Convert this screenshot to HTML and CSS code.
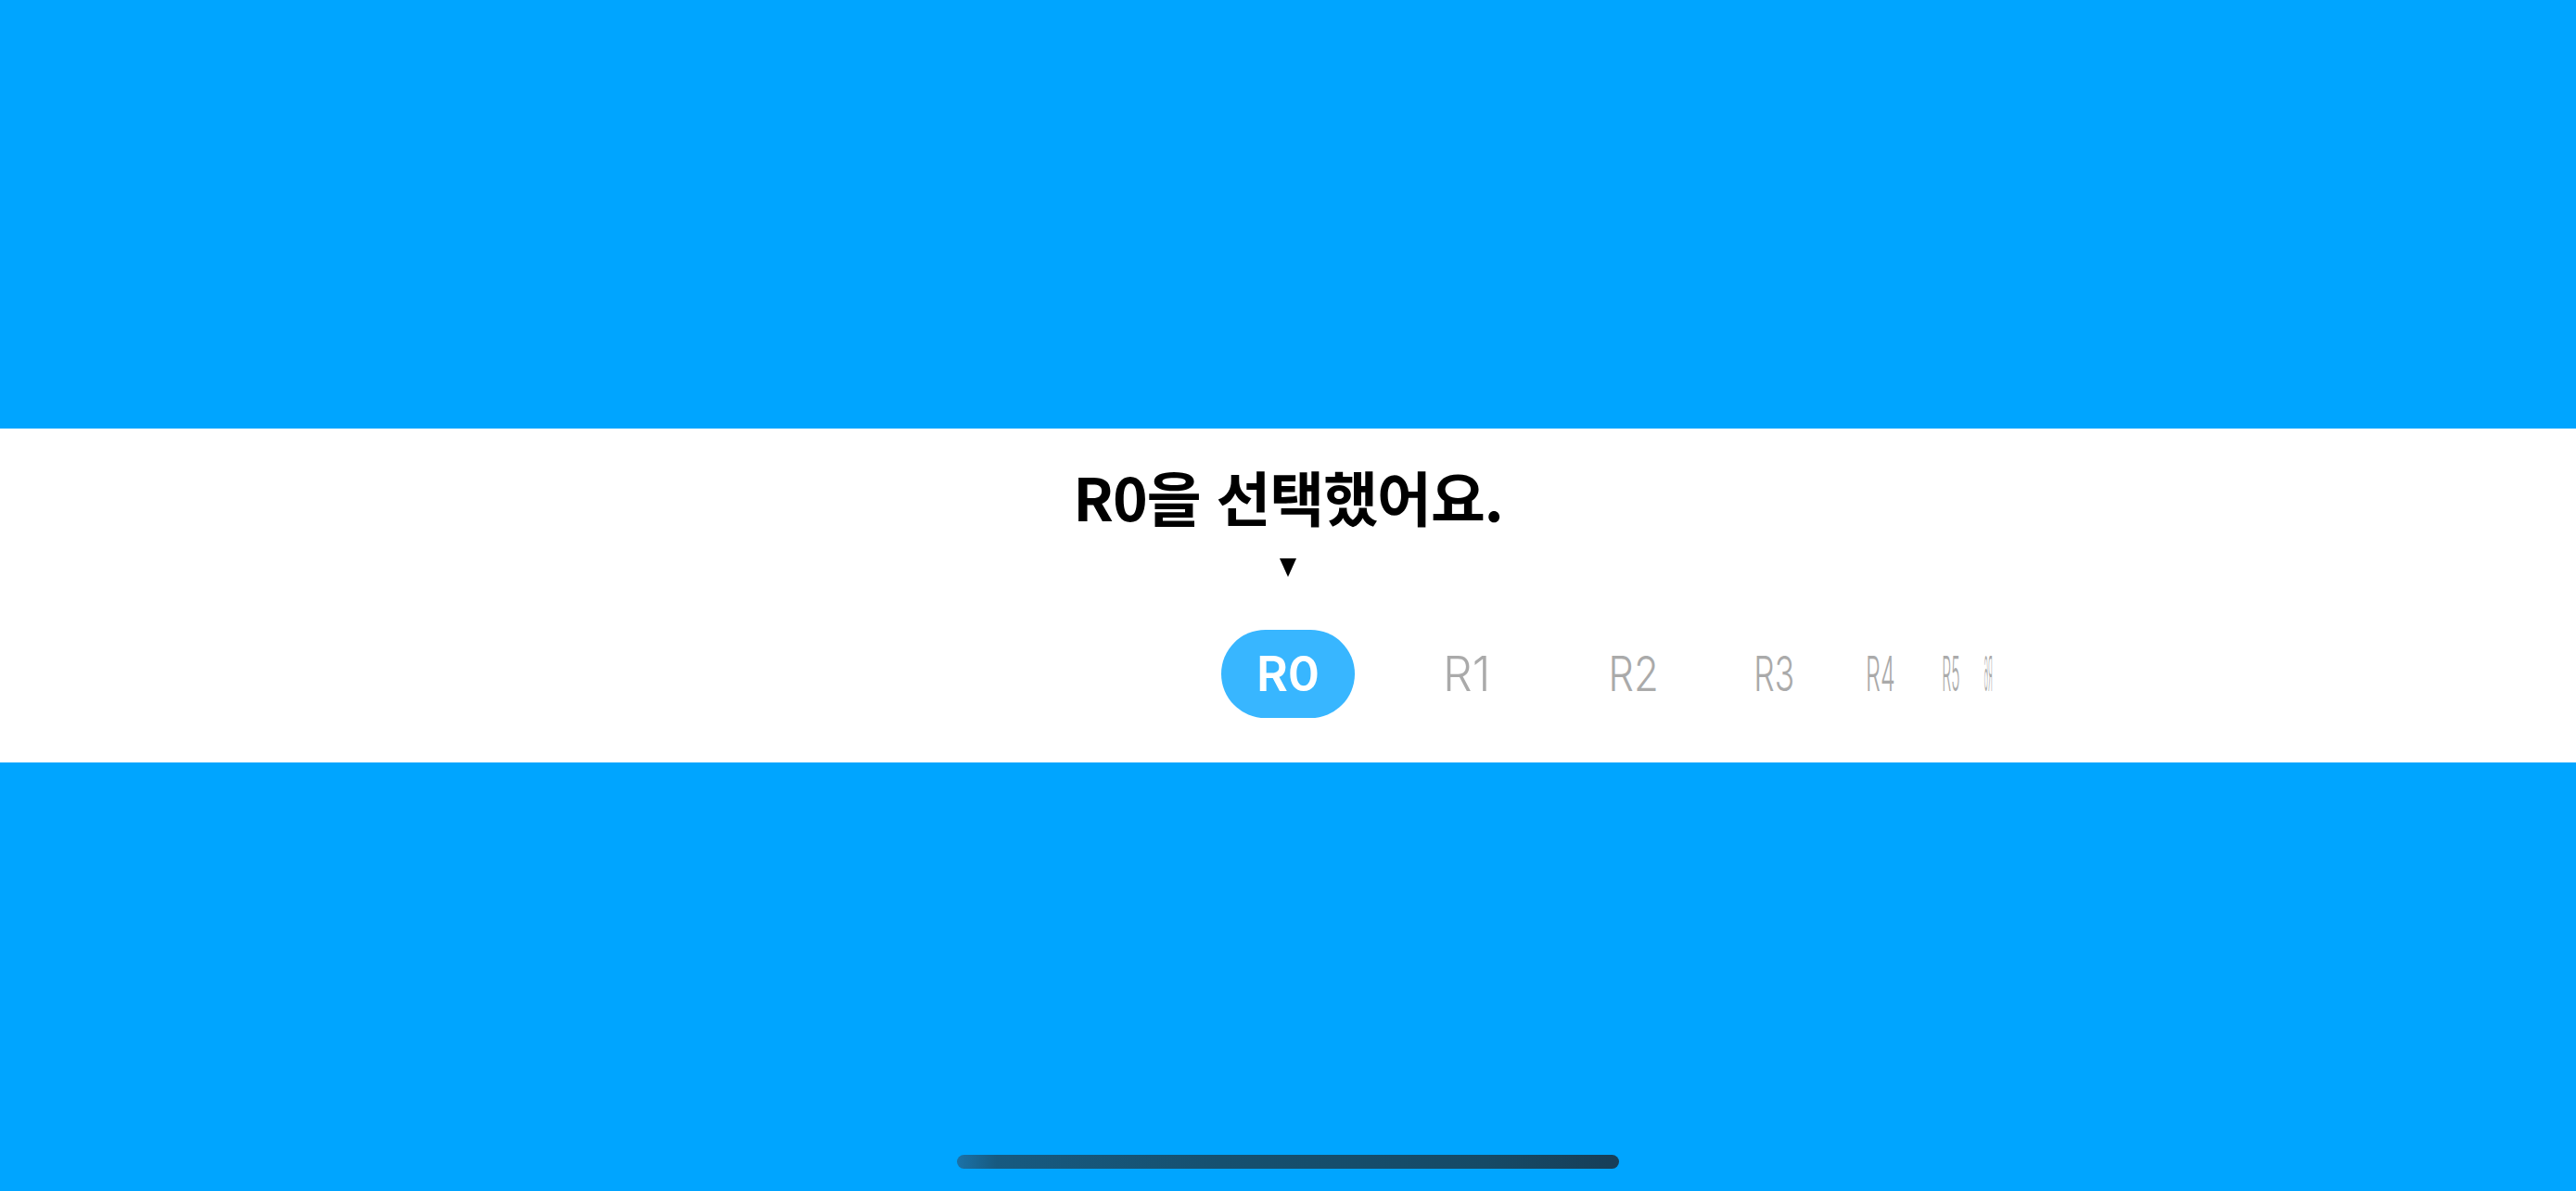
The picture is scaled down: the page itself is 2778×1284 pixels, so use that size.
FILE: index.html
```html
<!DOCTYPE html>
<html lang="ko">
<head>
    <meta charset="UTF-8">
    <meta name="viewport" content="width=device-width, initial-scale=1.0">
    <title>R 선택</title>
    <link rel="stylesheet" href="styles.css">
</head>
<body>
    <div class="sheet">
        <h1 class="title">R0을 선택했어요.</h1>
        <div class="pointer"></div>
        <div class="wheel">
            <div class="side"></div>
            <div class="slot now"><span class="pill">R0</span></div>
            <div class="side after">
                <div class="slot s1"><span style="transform: scaleX(0.96)">R1</span></div>
                <div class="slot s2"><span style="transform: scaleX(0.84)">R2</span></div>
                <div class="slot s3"><span style="transform: scaleX(0.68)">R3</span></div>
                <div class="slot s4"><span style="transform: scaleX(0.48)">R4</span></div>
                <div class="slot s5"><span style="transform: scaleX(0.3)">R5</span></div>
                <div class="slot s6"><span style="transform: scaleX(-0.14)">R6</span></div>
            </div>
        </div>
    </div>
    <div class="home"></div>
</body>
</html>
```

FILE: styles.css
```css
*{
    margin: 0;
    padding: 0;
    box-sizing: border-box;
}
html,body{
    height: 100%;
}
body{
    background: #00a5ff;
    overflow: hidden;
    position: relative;
}
.sheet{
    margin-top: 462px;
    height: 360px;
    background: #fff;
    display: flex;
    flex-direction: column;
    align-items: center;
}
.title{
    padding-top: 40px;
    font-family: "Noto Sans CJK KR", sans-serif;
    font-weight: 700;
    font-size: 64px;
    line-height: 64px;
    color: #000;
    letter-spacing: -1px;
}
.pointer{
    margin-top: 36px;
    width: 0;
    height: 0;
    border-left: 9px solid transparent;
    border-right: 9px solid transparent;
    border-top: 20px solid #000;
}
.wheel{
    margin-top: 57px;
    width: 100%;
    height: 95px;
    display: grid;
    grid-template-columns: 1fr 194px 1fr;
    font-family: Inter, "Noto Sans", sans-serif;
    font-size: 52px;
}
.side{
    display: flex;
}
.slot{
    height: 95px;
    display: flex;
    align-items: center;
    justify-content: center;
    flex-shrink: 0;
}
.slot span{
    display: inline-block;
    color: #aaa;
    font-weight: 300;
    line-height: 1;
}
.now .pill{
    width: 144px;
    height: 95px;
    border-radius: 48px;
    background: #38b6ff;
    color: #fff;
    font-weight: 600;
    display: flex;
    align-items: center;
    justify-content: center;
}
.s1{ width: 192px; }
.s2{ width: 166px; }
.s3{ width: 138px; }
.s4{ width: 92px; }
.s5{ width: 60px; }
.s6{ width: 20px; }
.home{
    position: absolute;
    left: 1032px;
    top: 1245px;
    width: 714px;
    height: 15px;
    border-radius: 8px;
    background: linear-gradient(90deg, #1b72a8 0%, #175a80 6%, #16506f 40%, #164a66 80%, #173e58 100%);
}
```
